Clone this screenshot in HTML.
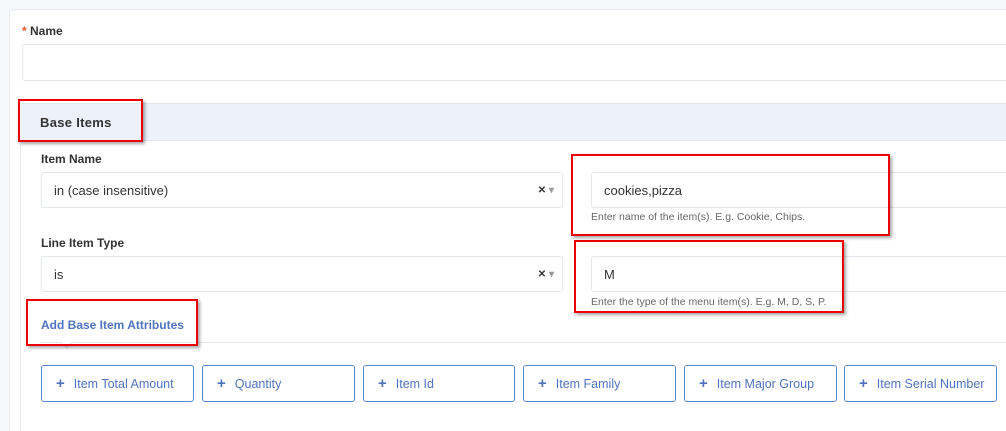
<!DOCTYPE html>
<html><head><style>
*{box-sizing:border-box;margin:0;padding:0}
html,body{width:1006px;height:431px;overflow:hidden}
body{background:#f7f8fb;font-family:"Liberation Sans",Arial,sans-serif;position:relative}
.abs{position:absolute}
.card{left:9px;top:9px;width:1010px;height:440px;background:#fff;border:1px solid #e6e9f0;border-radius:4px}
.lbl{font-size:12px;font-weight:bold;color:#333}
.inp{background:#fff;border:1px solid #e3e7ee;border-radius:3px;font-size:13px;color:#333;padding-left:12px;display:flex;align-items:center}
.help{font-size:10.5px;color:#666}
.red{border:2px solid #e00;box-shadow:2px 2px 3px rgba(0,0,0,.35)}
.btn{top:365px;height:37px;border:1px solid #5b86d0;border-radius:3px;color:#4f74bf;font-size:12.5px;display:flex;align-items:center;padding-left:14px}
.btn b{font-size:15px;margin-right:9px}
.xa{position:absolute;right:8px;top:12px;font-size:10px;color:#333;font-weight:bold}
</style></head><body>
<div class="abs card"></div>
<div class="abs lbl" style="left:22px;top:24px"><span style="color:#e8542b">*</span> Name</div>
<div class="abs inp" style="left:22px;top:44px;width:990px;height:37px"></div>
<div class="abs" style="left:20px;top:140px;width:1px;height:300px;background:#e6e9f0"></div>
<div class="abs" style="left:20px;top:103px;width:990px;height:38px;background:#edf1f9;border-top:1px solid #e3e7ee;border-bottom:1px solid #e3e7ee"></div>
<div class="abs lbl" style="left:40px;top:115px;font-size:13px;letter-spacing:.3px">Base Items</div>
<div class="abs red" style="left:18px;top:99px;width:125px;height:43px"></div>

<div class="abs lbl" style="left:41px;top:152px">Item Name</div>
<div class="abs inp" style="left:41px;top:172px;width:522px;height:36px">in (case insensitive)<span class="xa">✕ <span style="color:#999">▾</span></span></div>
<div class="abs inp" style="left:591px;top:172px;width:420px;height:36px">cookies,pizza</div>
<div class="abs help" style="left:591px;top:211px">Enter name of the item(s). E.g. Cookie, Chips.</div>
<div class="abs red" style="left:571px;top:154px;width:319px;height:82px"></div>

<div class="abs lbl" style="left:41px;top:236px">Line Item Type</div>
<div class="abs inp" style="left:41px;top:256px;width:522px;height:36px">is<span class="xa">✕ <span style="color:#999">▾</span></span></div>
<div class="abs inp" style="left:591px;top:256px;width:420px;height:36px">M</div>
<div class="abs help" style="left:591px;top:296px">Enter the type of the menu item(s). E.g. M, D, S, P.</div>
<div class="abs red" style="left:574px;top:240px;width:270px;height:73px"></div>

<div class="abs" style="left:40px;top:342px;width:970px;height:1px;background:#e3e7ee"></div>
<div class="abs" style="left:62px;top:338px;width:9px;height:9px;background:#fff;border-right:1px solid #e3e7ee;border-bottom:1px solid #e3e7ee;transform:rotate(45deg)"></div>
<div class="abs lbl" style="left:41px;top:318px;color:#4f74bf">Add Base Item Attributes</div>
<div class="abs red" style="left:26px;top:299px;width:172px;height:47px"></div>

<div class="abs btn" style="left:41px;width:153px"><b>+</b>Item Total Amount</div>
<div class="abs btn" style="left:202px;width:153px"><b>+</b>Quantity</div>
<div class="abs btn" style="left:363px;width:152px"><b>+</b>Item Id</div>
<div class="abs btn" style="left:523px;width:153px"><b>+</b>Item Family</div>
<div class="abs btn" style="left:684px;width:153px"><b>+</b>Item Major Group</div>
<div class="abs btn" style="left:844px;width:153px"><b>+</b>Item Serial Number</div>
</body></html>
